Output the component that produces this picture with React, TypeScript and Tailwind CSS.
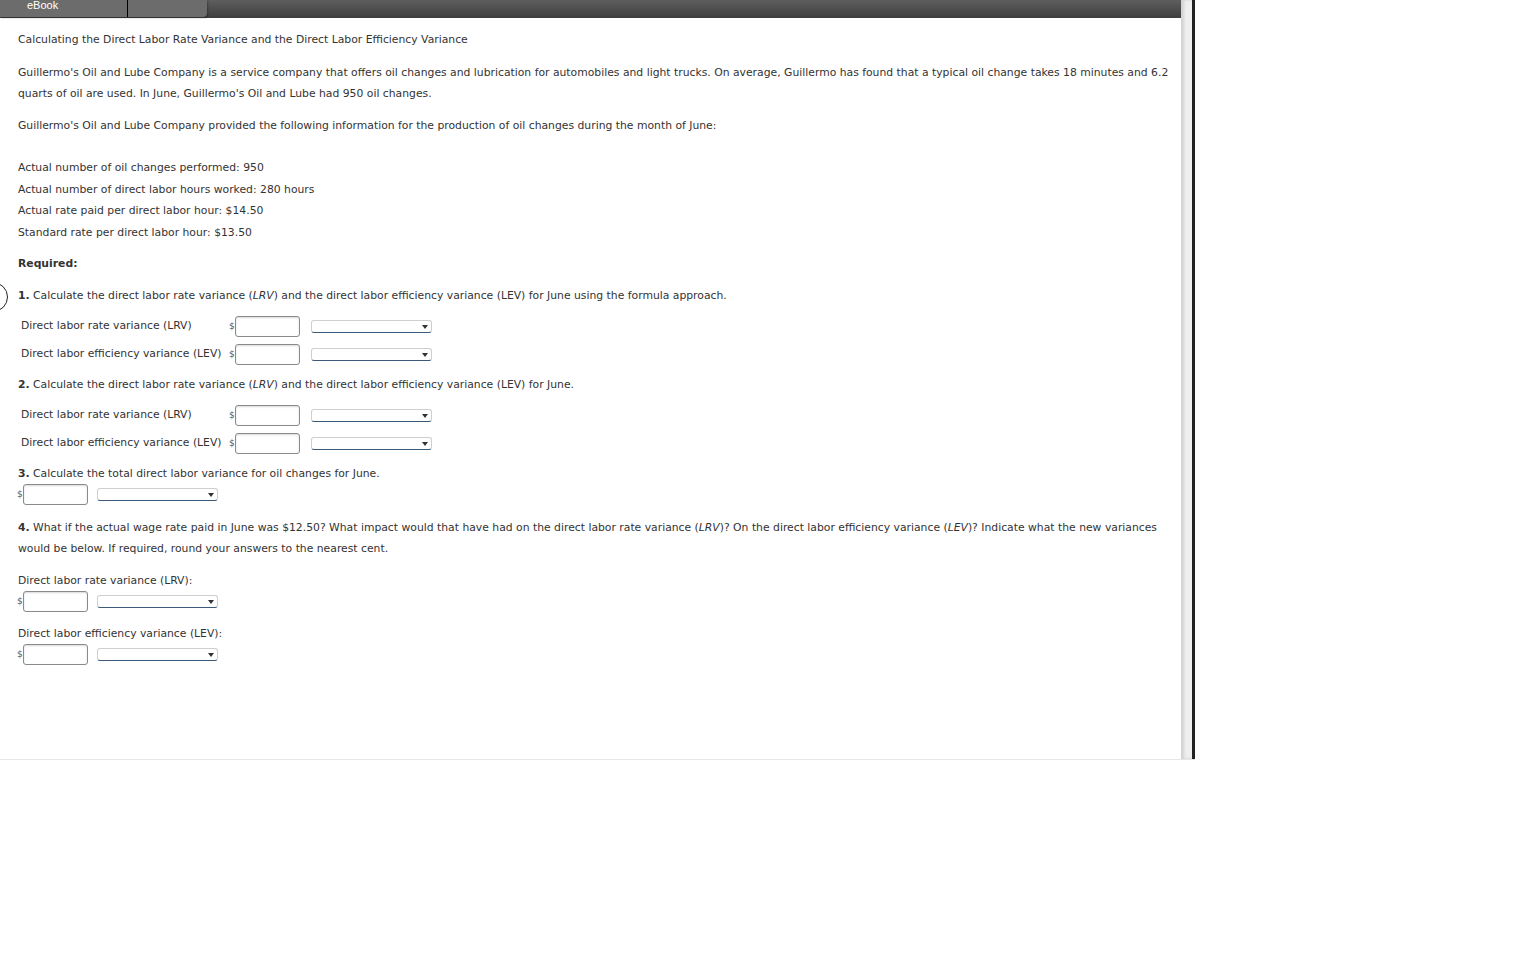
import React from "react";

const FACTS = [
  "Actual number of oil changes performed: 950",
  "Actual number of direct labor hours worked: 280 hours",
  "Actual rate paid per direct labor hour: $14.50",
  "Standard rate per direct labor hour: $13.50",
];

function Money() {
  return (
    <span className="flex items-center">
      <span className="text-[9px] leading-none text-[#555]">$</span>
      <input
        type="text"
        className="h-[21px] w-[65px] rounded-[3px] border border-[#8a8a8a] bg-white shadow-[inset_0_1px_2px_rgba(0,0,0,0.15)] outline-none"
      />
    </span>
  );
}

function Pick() {
  return (
    <span className="relative flex h-[13px] w-[121px] items-center rounded-[3px] border border-[#cfcfcf] border-b-[#3b5a7a] bg-white">
      <span className="absolute right-[3px] top-[4px] h-0 w-0 border-x-[3px] border-t-[4px] border-x-transparent border-t-[#333]" />
    </span>
  );
}

function Row({ label }: { label: string }) {
  return (
    <div className="flex h-[28px] items-center pl-[3px]">
      <span className="w-[208px]">{label}</span>
      <Money />
      <span className="ml-[11px]">
        <Pick />
      </span>
    </div>
  );
}

function Inline() {
  return (
    <div className="flex items-center">
      <Money />
      <span className="ml-[9px]">
        <Pick />
      </span>
    </div>
  );
}

export default function App() {
  return (
    <div className="min-h-[976px] bg-white font-['DejaVu_Sans',Verdana,sans-serif] text-[10.8px] text-[#333]">
      <div className="flex h-[760px] w-[1195px] border-b border-[#e6e6e6]">
        <div className="relative flex w-[1181px] flex-col">
          {/* top bar */}
          <div className="flex h-[18px] bg-[linear-gradient(180deg,#5e5e5e,#3e3e3e)]">
            <div className="flex h-[17px] w-[207px] rounded-br-[4px] bg-[#6c6c6c] shadow-[1px_1px_2px_rgba(0,0,0,0.3)]">
              <div className="w-[128px] border-r border-black pl-[27px] font-['Liberation_Sans',Arial,sans-serif] text-[11px] leading-[10px] text-white">
                eBook
              </div>
            </div>
          </div>

          {/* circle marker */}
          <div className="absolute left-[-22px] top-[282px] h-[30px] w-[30px] rounded-full border-[1.5px] border-[#222]" />

          <div className="pl-[18px] pr-[6px] pt-[14px]">
            <p className="leading-[16px]">
              Calculating the Direct Labor Rate Variance and the Direct Labor Efficiency Variance
            </p>
            <p className="mt-[14px] leading-[21px]">
              Guillermo's Oil and Lube Company is a service company that offers oil changes and lubrication for
              automobiles and light trucks. On average, Guillermo has found that a typical oil change takes 18 minutes
              and 6.2 quarts of oil are used. In June, Guillermo's Oil and Lube had 950 oil changes.
            </p>
            <p className="mt-[11px] leading-[21px]">
              Guillermo's Oil and Lube Company provided the following information for the production of oil changes
              during the month of June:
            </p>

            <div className="mt-[21px] flex flex-col">
              {FACTS.map((f) => (
                <span key={f} className="leading-[21.6px]">
                  {f}
                </span>
              ))}
            </div>

            <p className="mt-[10px] font-bold leading-[21px]">Required:</p>

            <p className="mt-[11px] leading-[21px]">
              <b>1.</b> Calculate the direct labor rate variance (<i>LRV</i>) and the direct labor efficiency variance
              (LEV) for June using the formula approach.
            </p>
            <div className="mt-[6px]">
              <Row label="Direct labor rate variance (LRV)" />
              <Row label="Direct labor efficiency variance (LEV)" />
            </div>

            <p className="mt-[6px] leading-[21px]">
              <b>2.</b> Calculate the direct labor rate variance (<i>LRV</i>) and the direct labor efficiency variance
              (LEV) for June.
            </p>
            <div className="mt-[6px]">
              <Row label="Direct labor rate variance (LRV)" />
              <Row label="Direct labor efficiency variance (LEV)" />
            </div>

            <p className="mt-[6px] leading-[21px]">
              <b>3.</b> Calculate the total direct labor variance for oil changes for June.
            </p>
            <div className="-ml-[1px]">
              <Inline />
            </div>

            <p className="mt-[12px] leading-[21px]">
              <b>4.</b> What if the actual wage rate paid in June was $12.50? What impact would that have had on the
              direct labor rate variance (<i>LRV</i>)? On the direct labor efficiency variance (<i>LEV</i>)? Indicate
              what the new variances would be below. If required, round your answers to the nearest cent.
            </p>

            <p className="mt-[11px] leading-[21px]">Direct labor rate variance (LRV):</p>
            <div className="-ml-[1px]">
              <Inline />
            </div>
            <p className="mt-[11px] leading-[21px]">Direct labor efficiency variance (LEV):</p>
            <div className="-ml-[1px]">
              <Inline />
            </div>
          </div>
        </div>
        {/* scroll strip */}
        <div className="w-[11px] bg-[#efefef] shadow-[inset_3px_0_3px_rgba(0,0,0,0.12)]" />
        <div className="w-[3px] bg-[#222]" />
      </div>
    </div>
  );
}
